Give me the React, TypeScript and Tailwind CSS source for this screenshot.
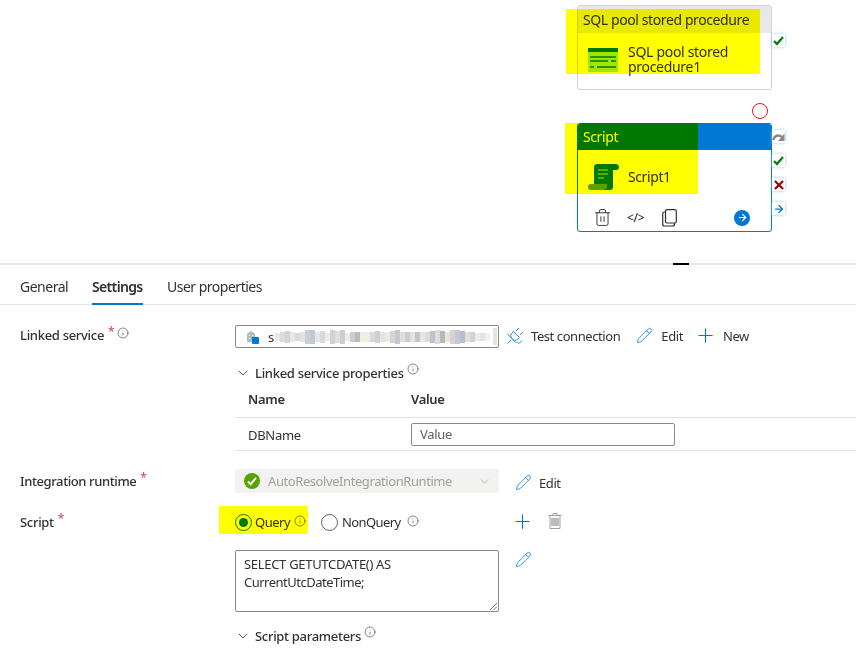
import { ChevronDown, Pencil, Plus, Info, Trash2, ArrowRight } from "lucide-react";

// светлая мозаика вместо скрытого имени сервиса
const mosaic = [
  ["#e4e4e4", 8], ["#d2d2d2", 10], ["#c8c8c4", 12], ["#e2e0dc", 10], ["#d0d0d0", 8], ["#dcdcdc", 10], ["#bcc4cc", 14], ["#b4bcc4", 14],
  ["#e0e0e0", 10], ["#d4d0cc", 12], ["#e6e6e6", 8], ["#c8c4c8", 14], ["#dcd8d8", 12], ["#bfc4c4", 14], ["#e8e8e8", 8], ["#c4c0c0", 10],
  ["#a8acac", 10], ["#eceae0", 10], ["#f0e8dc", 10], ["#d0d0d0", 10], ["#c0c4c8", 12], ["#dcdcdc", 10], ["#e8e4dc", 10], ["#c8ccd0", 12],
  ["#b8bcc0", 14], ["#d8d8d8", 10], ["#c0c0bc", 10], ["#dcdcd8", 10], ["#b4b8b8", 10], ["#e0e0e0", 10], ["#d0d4d8", 10], ["#b0b4bc", 12],
  ["#d8d4cc", 14], ["#a8a4a4", 12], ["#e4dccc", 10], ["#c8c8c8", 14], ["#b0bcc8", 14], ["#a8b0bc", 12], ["#d8d8d8", 10], ["#c8c8cc", 10],
  ["#e8e8e8", 8], ["#dcdcdc", 8], ["#eeeeee", 8],
] as const;

function InfoDot({ className = "" }: { className?: string }) {
  return <Info className={"w-[12px] h-[12px] text-[#484644] shrink-0 " + className} strokeWidth={1.3} />;
}

function Star() {
  return <span className="text-[#d0506a] text-[12px] ml-[4px] relative -top-[3px]">*</span>;
}

function SideBtn({ children }: { children: React.ReactNode }) {
  return (
    <div className="w-[13px] h-[13px] bg-white flex items-center justify-center shadow-[0_0_3px_#8fc3ee]">
      {children}
    </div>
  );
}

function TickIcon() {
  return (
    <svg width="11" height="10" viewBox="0 0 11 10" fill="none" stroke="#107c10" strokeWidth="2.4">
      <path d="M1 5l3 3 6-7" />
    </svg>
  );
}

function CrossIcon() {
  return (
    <svg width="10" height="10" viewBox="0 0 11 11" fill="none" stroke="#a80000" strokeWidth="2.4">
      <path d="M1 1l9 9M10 1l-9 9" />
    </svg>
  );
}

function RedoIcon() {
  return (
    <svg width="13" height="11" viewBox="0 0 13 11" fill="none">
      <path d="M1 9Q4 2 10 6" stroke="#8a8886" strokeWidth="2.4" />
      <path d="M12.500 2.500V10H6z" fill="#8a8886" />
    </svg>
  );
}

function SqlIcon() {
  return (
    <svg width="30" height="24" viewBox="0 0 30 24">
      <rect x="0" y="0" width="30" height="24" fill="#a0e6ff" />
      <rect x="0" y="0" width="30" height="4" fill="#0078d4" />
      <path d="M2 9h26M2 13h18M23 13h5M2 19h4M9 19h19" stroke="#0078d4" strokeWidth="1.6" fill="none" />
    </svg>
  );
}

function ScrollIcon() {
  return (
    <svg width="31" height="28" viewBox="0 0 31 28">
      <path d="M0 24q0-3 3-3h16v6H3q-3 0-3-3z" fill="#5aa0e8" />
      <path d="M6 4q0-3 4-3h17q4 0 4 3t-3 3h-3v17q0 3-3 3h-6q3-1 3-3v-3H6z" fill="#0078d4" />
      <path d="M10 7h10M10 11h10M10 15h6" stroke="#a0e6ff" strokeWidth="1.2" fill="none" />
    </svg>
  );
}

function ServiceIcon() {
  return (
    <svg width="13" height="14" viewBox="0 0 13 14">
      <path d="M1 4l4-3 4 3v8H1z" fill="#a8bcc4" />
      <path d="M3 5h1v1H3zM6 5h1v1H6zM3 8h1v1H3z" fill="#fff" />
      <rect x="6" y="7" width="7" height="7" rx="1" fill="#0078d4" />
    </svg>
  );
}

function PlugIcon() {
  return (
    <svg width="16" height="16" viewBox="0 0 16 16" fill="none" stroke="#2b88d8" strokeWidth="1">
      <path d="M6.500 3.500l6 6-2 2q-2 1.500-4 .5l-2.500-2.500q-1-2 .5-4z" />
      <path d="M9 3l3-3M13 7l3-3M4 12l-3.500 3.500M0.500 6l9 9" />
      <path d="M10.500 14.500l1.500 1 3-3" />
    </svg>
  );
}

function TrashSolid() {
  return (
    <svg width="14" height="18" viewBox="0 0 14 18" fill="none" stroke="#a19f9d" strokeWidth="1">
      <path d="M0.500 3.500h13M5 3.500V1.500h4v2M2 3.500v13h10v-13" />
      <path d="M4 6v8M6 6v8M8 6v8M10 6v8" strokeWidth="1.400" />
    </svg>
  );
}

function CopyIcon() {
  return (
    <svg width="15" height="18" viewBox="0 0 15 18" fill="none" stroke="#323130" strokeWidth="1.200">
      <rect x="3.500" y="0.600" width="10.800" height="13.400" rx="1.500" />
      <path d="M3.500 3H2.500Q0.700 3 0.700 5v10q0 2 2 2h8q1.800 0 1.800-2v-1" />
    </svg>
  );
}

function Radio({ on = false }: { on?: boolean }) {
  return (
    <span className={"w-[17px] h-[17px] rounded-full border flex items-center justify-center shrink-0 " + (on ? "border-[#0078d4]" : "border-[#605e5c]")}>
      {on && <span className="w-[9px] h-[9px] rounded-full bg-[#0078d4]" />}
    </span>
  );
}

function Canvas() {
  return (
    <div className="relative h-[263px] bg-white text-[14px] tracking-[-0.4px]">
      {/* узел SQL pool */}
      <div className="absolute left-[577px] top-[5px] w-[195px] h-[85px] rounded-[3px] border border-[#d2d2d2] bg-white overflow-hidden">
        <div className="h-[27px] bg-[#e8e8e8] pl-[5px] flex items-center text-[#323130]">SQL pool stored procedure</div>
        <div className="flex pl-[10px] pt-[15px] gap-[10px]">
          <SqlIcon />
          <div className="leading-[15px] -mt-[4px] text-[#323130] tracking-[-0.3px]">
            <div className="h-[15px]">SQL pool stored</div>
            <div className="h-[15px]">procedure1</div>
          </div>
        </div>
      </div>
      <div className="absolute left-[772px] top-[34px]">
        <SideBtn><TickIcon /></SideBtn>
      </div>

      <div className="absolute left-[752px] top-[103px] w-[16px] h-[16px] rounded-full border border-[#e81123]" />

      {/* узел Script */}
      <div className="absolute left-[577px] top-[123px] w-[195px] h-[109px] rounded-[3px] border border-[#0078d4] bg-white overflow-hidden">
        <div className="h-[26px] bg-[#0078d4] pl-[5px] flex items-center text-white">Script</div>
        <div className="flex items-center pl-[10px] pt-[13px] gap-[9px]">
          <ScrollIcon />
          <span className="text-[#323130]">Script1</span>
        </div>
        <div className="flex items-center pl-[15px] pt-[17px] text-[#323130]">
          <Trash2 className="w-[19px] h-[19px]" strokeWidth={1.200} />
          <span className="ml-[15px] text-[12px] leading-none font-medium w-[16px] text-center">&lt;/&gt;</span>
          <span className="ml-[19px] flex"><CopyIcon /></span>
          <span className="ml-[57px] w-[16px] h-[16px] rounded-full bg-[#0078d4] flex items-center justify-center">
            <ArrowRight className="w-[11px] h-[11px] text-white" strokeWidth={2.500} />
          </span>
        </div>
      </div>
      <div className="absolute left-[772px] top-[130px] flex flex-col gap-[11px]">
        <SideBtn><RedoIcon /></SideBtn>
        <SideBtn><TickIcon /></SideBtn>
        <SideBtn><CrossIcon /></SideBtn>
        <SideBtn><ArrowRight className="w-[12px] h-[12px] text-[#0078d4]" strokeWidth={2.500} /></SideBtn>
      </div>

      {/* жёлтые выделения */}
      <div className="absolute left-[566px] top-[9px] w-[194px] h-[65px] bg-[#ffff00] mix-blend-multiply" />
      <div className="absolute left-[565px] top-[123px] w-[133px] h-[71px] bg-[#ffff00] mix-blend-multiply" />
    </div>
  );
}

function Tabs() {
  return (
    <div className="relative border-t-2 border-[#e8e8e8]">
      <div className="absolute left-[673px] -top-[2px] w-[16px] h-[2px] bg-black" />
      <div className="h-[40px] border-b border-[#e6e6e6] flex pl-[20px] text-[#323130] text-[14px] tracking-[-0.5px]">
        <div className="pt-[13px] w-[48px]">General</div>
        <div className="pt-[13px] ml-[24px] font-semibold border-b-2 border-[#0078d4] h-[40px] tracking-[-0.65px] w-[51px]">Settings</div>
        <div className="pt-[13px] ml-[24px]">User properties</div>
      </div>
    </div>
  );
}

function Form() {
  return (
    <div className="relative text-[#323130]">
      {/* Linked service */}
      <div className="flex pl-[20px] pt-[20px]">
        <div className="w-[215px] flex items-start pt-[1px] font-medium">
          Linked service<Star /><InfoDot className="ml-[3px] mt-[1px]" />
        </div>
        <div className="relative w-[264px] h-[23px] border border-[#8a8886] rounded-[2px] flex items-center pl-[10px] overflow-hidden">
          <span className="mr-[9px] flex shrink-0"><ServiceIcon /></span>
          <span>s</span>
          <span className="flex items-center h-[16px] blur-[0.7px] opacity-80 ml-[1px]">
            {mosaic.map(([c, h], i) => (
              <span key={i} className="w-[5px]" style={{ backgroundColor: c, height: h }} />
            ))}
          </span>
          <span className="absolute right-[1px] top-[2px] bottom-[2px] w-[4px] bg-[#e4e4e4]" />
        </div>
        <div className="flex items-center h-[21px] ml-[8px] tracking-[-0.42px]">
          <PlugIcon />
          <span className="ml-[8px]">Test connection</span>
          <Pencil className="w-[17px] h-[17px] ml-[16px] text-[#0078d4]" strokeWidth={1.100} />
          <span className="ml-[8px]">Edit</span>
          <Plus className="w-[23px] h-[23px] ml-[11px] text-[#0078d4]" strokeWidth={1.200} />
          <span className="ml-[6px]">New</span>
        </div>
      </div>

      {/* Linked service properties */}
      <div className="ml-[235px] mt-[16px] flex items-start h-[18px]">
        <ChevronDown className="w-[16px] h-[16px] mt-[1px] text-[#323130]" strokeWidth={1.200} />
        <span className="ml-[4px] font-medium">Linked service properties</span>
        <InfoDot className="ml-[3px] -mt-[1px]" />
      </div>
      <div className="ml-[235px] mt-[8px] h-[28px] border-b border-[#e1e1e1] flex font-semibold">
        <div className="w-[176px] pl-[13px]">Name</div>
        <div>Value</div>
      </div>
      <div className="ml-[235px] h-[33px] border-b border-[#e1e1e1] flex items-center">
        <div className="w-[176px] pl-[13px] pt-[2px]">DBName</div>
        <div className="w-[264px] h-[23px] border border-[#8a8886] rounded-[2px] px-[8px] flex items-center text-[#605e5c]">Value</div>
      </div>

      {/* Integration runtime */}
      <div className="flex pl-[20px] mt-[18px]">
        <div className="w-[215px] flex items-start pt-[3px] font-medium tracking-[-0.4px]">
          Integration runtime<Star />
        </div>
        <div className="w-[264px] h-[24px] bg-[#f3f2f1] rounded-[2px] flex items-center pl-[9px] pr-[8px] text-[#a19f9d] tracking-[-0.42px]">
          <span className="w-[16px] h-[16px] rounded-full bg-[#57a300] flex items-center justify-center mr-[8px]">
            <svg width="10" height="9" viewBox="0 0 11 10" fill="none" stroke="#fff" strokeWidth="2.2"><path d="M1 5l3 3 6-7" /></svg>
          </span>
          <span className="flex-1">AutoResolveIntegrationRuntime</span>
          <ChevronDown className="w-[13px] h-[13px]" strokeWidth={1.300} />
        </div>
        <Pencil className="w-[17px] h-[17px] ml-[16px] mt-[5px] text-[#0078d4]" strokeWidth={1.100} />
        <span className="ml-[7px] mt-[5px] tracking-[-0.42px]">Edit</span>
      </div>

      {/* Script */}
      <div className="flex pl-[20px] mt-[19px] relative">
        <div className="w-[215px] flex items-start pt-[1px] font-medium">
          Script<Star />
        </div>
        <div className="w-[264px] flex items-center h-[20px] tracking-[-0.5px]">
          <Radio on />
          <span className="ml-[3px]">Query</span>
          <InfoDot className="ml-[4px] -mt-[3px]" />
          <span className="ml-[15px]"><Radio /></span>
          <span className="ml-[4px] tracking-[-0.6px]">NonQuery</span>
          <InfoDot className="ml-[6px] -mt-[3px]" />
        </div>
        <Plus className="w-[23px] h-[23px] ml-[12px] -mt-[2px] text-[#0078d4]" strokeWidth={1.200} />
        <span className="ml-[14px]"><TrashSolid /></span>
      </div>

      <div className="flex ml-[235px] mt-[17px]">
        <div className="relative w-[264px] h-[62px] border border-[#8a8886] rounded-[2px] pl-[8px] pt-[5px] leading-[17.500px]">
          SELECT GETUTCDATE() AS<br /><span className="tracking-[-0.5px]">CurrentUtcDateTime;</span>
          <svg className="absolute right-[1px] bottom-[1px]" width="8" height="8" viewBox="0 0 8 8" stroke="#767676" strokeWidth="1">
            <path d="M1 8 8 1M4.500 8 8 4.500" />
          </svg>
        </div>
        <Pencil className="w-[17px] h-[17px] ml-[16px] mt-[1px] text-[#0078d4]" strokeWidth={1.100} />
      </div>

      <div className="ml-[235px] mt-[15px] flex items-start h-[18px]">
        <ChevronDown className="w-[16px] h-[16px] mt-[1px] text-[#323130]" strokeWidth={1.200} />
        <span className="ml-[4px] font-medium">Script parameters</span>
        <InfoDot className="ml-[3px] -mt-[1px]" />
      </div>

      {/* жёлтое выделение Query */}
      <div className="absolute left-[219px] top-[201px] w-[89px] h-[28px] bg-[#ffff00] mix-blend-multiply" />
    </div>
  );
}

export default function App() {
  return (
    <div className="w-[856px] h-[651px] overflow-hidden bg-white text-[13px] leading-[18px] tracking-[-0.3px] font-['Noto_Sans',sans-serif] isolate">
      <Canvas />
      <Tabs />
      <Form />
    </div>
  );
}
